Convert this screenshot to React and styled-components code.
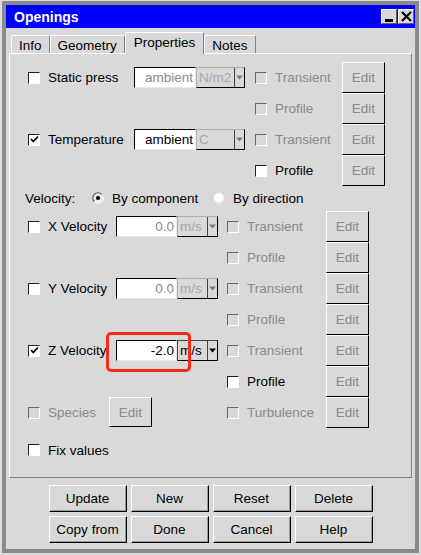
import React from "react";
import styled, { createGlobalStyle } from "styled-components";

const GREY = "#d9d9d9";
const DIM = "#8a8a8a";

const GlobalStyle = createGlobalStyle`
  html, body { margin: 0; padding: 0; }
  body {
    background: #dcdcdc;
    font-family: "Liberation Sans", Arial, sans-serif;
    font-size: 13.5px;
    color: #000;
  }
`;

const Screen = styled.div`
  width: 421px;
  height: 555px;
  box-sizing: border-box;
  padding: 1px 2px 2px 2px;
`;

const Window = styled.div`
  height: 100%;
  box-sizing: border-box;
  border: 4px solid #8a8a8a;
  background: ${GREY};
  display: flex;
  flex-direction: column;
`;

const TitleBar = styled.div`
  height: 23px;
  flex: none;
  display: flex;
  align-items: center;
  padding: 0 1px 0 8px;
  background: #0000ff;
  color: #fff;
  font-weight: bold;
  font-size: 14px;
`;

const Title = styled.span`
  flex: 1;
`;

const TitleButton = styled.span`
  width: 16px;
  height: 15px;
  margin-left: 1px;
  box-sizing: border-box;
  display: inline-flex;
  align-items: center;
  justify-content: center;
  background: ${GREY};
  border: 1px solid;
  border-color: #fff #606060 #606060 #fff;
`;

const Body = styled.div`
  flex: 1;
  padding: 4px 3px 0 3px;
  display: flex;
  flex-direction: column;
`;

const TabStrip = styled.div`
  height: 21px;
  display: flex;
  align-items: flex-end;
  padding-left: 2px;
  position: relative;
  z-index: 1;
`;

const Tab = styled.div`
  box-sizing: border-box;
  height: ${(p) => (p.$active ? 22 : 18)}px;
  margin-bottom: ${(p) => (p.$active ? -1 : 0)}px;
  padding: ${(p) => (p.$active ? "0 8px 2px" : "2px 7px 0")};
  display: flex;
  align-items: center;
  background: ${GREY};
  border: 1px solid;
  border-bottom: none;
  border-color: #fff #808080 transparent #fff;
  border-radius: 2px 2px 0 0;
`;

const Panel = styled.div`
  height: 425px;
  box-sizing: border-box;
  border: 1px solid;
  border-color: #fff #808080 #808080 #fff;
  padding: 8px 0 0 18px;
  display: flex;
  flex-direction: column;
`;

const OptionGrid = styled.div`
  display: grid;
  grid-template-columns: ${(p) => p.$cols};
  grid-auto-rows: 31px;
  align-items: center;
`;

const CheckLabel = styled.label`
  display: flex;
  align-items: center;
  gap: 8px;
  color: ${(p) => (p.$dim ? DIM : "#000")};
  white-space: nowrap;
`;

const Box = styled.span`
  width: 12px;
  height: 12px;
  flex: none;
  box-sizing: border-box;
  display: inline-flex;
  align-items: center;
  justify-content: center;
  border: 1px solid;
  border-color: ${(p) => (p.$dim ? "#6a6a6a" : "#202020")} #fff #fff
    ${(p) => (p.$dim ? "#6a6a6a" : "#202020")};
  background: ${(p) => (p.$dim ? GREY : "#fff")};
`;

const FieldWrap = styled.div`
  position: relative;
  display: flex;
  height: 21px;
`;

const Input = styled.div`
  width: ${(p) => p.$w}px;
  box-sizing: border-box;
  border: 1px solid;
  border-color: #000 #e8e8e8 #e8e8e8 #000;
  background: #fff;
  color: ${(p) => (p.$dim ? DIM : "#000")};
  text-align: right;
  padding-right: 2px;
  line-height: 19px;
`;

const Select = styled.div`
  width: ${(p) => p.$w}px;
  box-sizing: border-box;
  display: flex;
  border: 1px solid;
  border-color: ${(p) => (p.$dim ? "#b0b0b0" : "#404040")} #000 #000
    ${(p) => (p.$dim ? "#b0b0b0" : "#404040")};
  background: ${GREY};
  color: ${(p) => (p.$dim ? "#a8a8a8" : "#000")};
  line-height: 19px;
`;

const SelectText = styled.span`
  flex: 1;
  padding-left: 2px;
  overflow: hidden;
  white-space: nowrap;
`;

const ArrowCell = styled.span`
  width: 9px;
  display: flex;
  align-items: center;
  justify-content: center;
  border-left: 1px solid #404040;
`;

const Callout = styled.span`
  position: absolute;
  left: -10px;
  top: -8px;
  width: 85px;
  height: 40px;
  box-sizing: border-box;
  border: 3px solid #f42a1c;
  border-radius: 5px;
  pointer-events: none;
`;

const EditButton = styled.div`
  align-self: stretch;
  box-sizing: border-box;
  width: 43px;
  height: ${(p) => p.$h || 31}px;
  display: flex;
  align-items: center;
  justify-content: center;
  border: 1px solid;
  border-color: #fff #000 #000 #fff;
  color: ${DIM};
`;

const VelocityRow = styled.div`
  height: 26px;
  margin-top: -1px;
  display: flex;
  align-items: center;
  margin-left: -3px;
`;

const VelocityLabel = styled.span`
  width: 67px;
`;

const RadioOption = styled.label`
  display: flex;
  align-items: center;
  gap: 8px;
  width: ${(p) => p.$w}px;
`;

const SpeciesCell = styled.div`
  grid-column: 1 / span 2;
  display: grid;
  grid-template-columns: 81px 43px;
  align-items: center;
  align-self: stretch;
`;

const FixRow = styled.div`
  margin-top: 11px;
  height: 22px;
  display: flex;
  align-items: center;
`;

const ButtonGrid = styled.div`
  margin-top: 7px;
  display: grid;
  grid-template-columns: repeat(4, 78px);
  grid-auto-rows: 27px;
  gap: 4px;
  justify-content: center;
`;

const Button = styled.div`
  box-sizing: border-box;
  display: flex;
  align-items: center;
  justify-content: center;
  border: 1px solid;
  border-color: #fff #000 #000 #fff;
  box-shadow: inset -1px -1px #9a9a9a;
`;

const CheckMark = () => (
  <svg width="9" height="9" viewBox="0 0 9 9">
    <path d="M1 4 L3.3 6.5 L8 1.5" fill="none" stroke="#000" strokeWidth="1.8" />
  </svg>
);

const Option = ({ label, checked, dim }) => (
  <CheckLabel $dim={dim}>
    <Box $dim={dim}>{checked && <CheckMark />}</Box>
    {label}
  </CheckLabel>
);

const Radio = ({ on }) => (
  <svg width="12" height="12" viewBox="0 0 12 12">
    <circle cx="6" cy="6" r="5.2" fill={on ? "#eaeaea" : "#fff"} stroke={on ? "#fff" : "#e4e4e4"} />
    {on && (
      <path d="M2.3 9.7 A5.2 5.2 0 0 1 9.7 2.3" fill="none" stroke="#505050" strokeWidth="1.2" />
    )}
    {on && <circle cx="6" cy="6" r="2" fill="#000" />}
  </svg>
);

const Field = ({ value, unit, valueDim, unitDim, inputW, unitW, marked }) => (
  <FieldWrap>
    <Input $dim={valueDim} $w={inputW}>
      {value}
    </Input>
    <Select $dim={unitDim} $w={unitW}>
      <SelectText>{unit}</SelectText>
      <ArrowCell>
        <svg width="7" height="5" viewBox="0 0 7 5">
          <path d="M0 0.5 H7 L3.5 4.5 Z" fill={unitDim ? "#7a7a7a" : "#000"} />
        </svg>
      </ArrowCell>
    </Select>
    {marked && <Callout />}
  </FieldWrap>
);

const topRows = [
  {
    label: "Static press",
    field: { value: "ambient", unit: "N/m2", valueDim: true, unitDim: true },
    side: { label: "Transient", dim: true },
  },
  { side: { label: "Profile", dim: true } },
  {
    label: "Temperature",
    checked: true,
    field: { value: "ambient", unit: "C", unitDim: true },
    side: { label: "Transient", dim: true },
  },
  { side: { label: "Profile" } },
];

const velocityRows = [
  {
    label: "X Velocity",
    field: { value: "0.0", unit: "m/s", valueDim: true, unitDim: true },
    side: { label: "Transient", dim: true },
  },
  { side: { label: "Profile", dim: true } },
  {
    label: "Y Velocity",
    field: { value: "0.0", unit: "m/s", valueDim: true, unitDim: true },
    side: { label: "Transient", dim: true },
  },
  { side: { label: "Profile", dim: true } },
  {
    label: "Z Velocity",
    checked: true,
    field: { value: "-2.0", unit: "m/s", marked: true },
    side: { label: "Transient", dim: true },
  },
  { side: { label: "Profile" } },
];

const renderRows = (rows, inputW, unitW) =>
  rows.map((row, i) => (
    <React.Fragment key={i}>
      <div>{row.label && <Option label={row.label} checked={row.checked} />}</div>
      <div>{row.field && <Field {...row.field} inputW={inputW} unitW={unitW} />}</div>
      <Option {...row.side} />
      <EditButton>Edit</EditButton>
    </React.Fragment>
  ));

const App = () => {
  return (
    <Screen>
      <GlobalStyle />
      <Window>
        <TitleBar>
          <Title>Openings</Title>
          <TitleButton>
            <svg width="10" height="10" viewBox="0 0 10 10">
              <rect x="1" y="7" width="8" height="3" fill="#000" />
            </svg>
          </TitleButton>
          <TitleButton>
            <svg width="11" height="11" viewBox="0 0 11 11">
              <path d="M1 1 L10 10 M10 1 L1 10" stroke="#000" strokeWidth="2.2" />
            </svg>
          </TitleButton>
        </TitleBar>
        <Body>
          <TabStrip>
            <Tab>Info</Tab>
            <Tab>Geometry</Tab>
            <Tab $active>Properties</Tab>
            <Tab>Notes</Tab>
          </TabStrip>
          <Panel>
            <OptionGrid $cols="106px 121px 87px 43px">{renderRows(topRows, 62, 49)}</OptionGrid>
            <VelocityRow>
              <VelocityLabel>Velocity:</VelocityLabel>
              <RadioOption $w={121}>
                <Radio on />
                By component
              </RadioOption>
              <RadioOption $w={120}>
                <Radio />
                By direction
              </RadioOption>
            </VelocityRow>
            <OptionGrid $cols="88px 111px 99px 43px">
              {renderRows(velocityRows, 61, 41)}
              <SpeciesCell>
                <Option label="Species" dim />
                <EditButton $h={30}>Edit</EditButton>
              </SpeciesCell>
              <Option label="Turbulence" dim />
              <EditButton>Edit</EditButton>
            </OptionGrid>
            <FixRow>
              <Option label="Fix values" />
            </FixRow>
          </Panel>
          <ButtonGrid>
            {["Update", "New", "Reset", "Delete", "Copy from", "Done", "Cancel", "Help"].map((b) => (
              <Button key={b}>{b}</Button>
            ))}
          </ButtonGrid>
        </Body>
      </Window>
    </Screen>
  );
};

export default App;
